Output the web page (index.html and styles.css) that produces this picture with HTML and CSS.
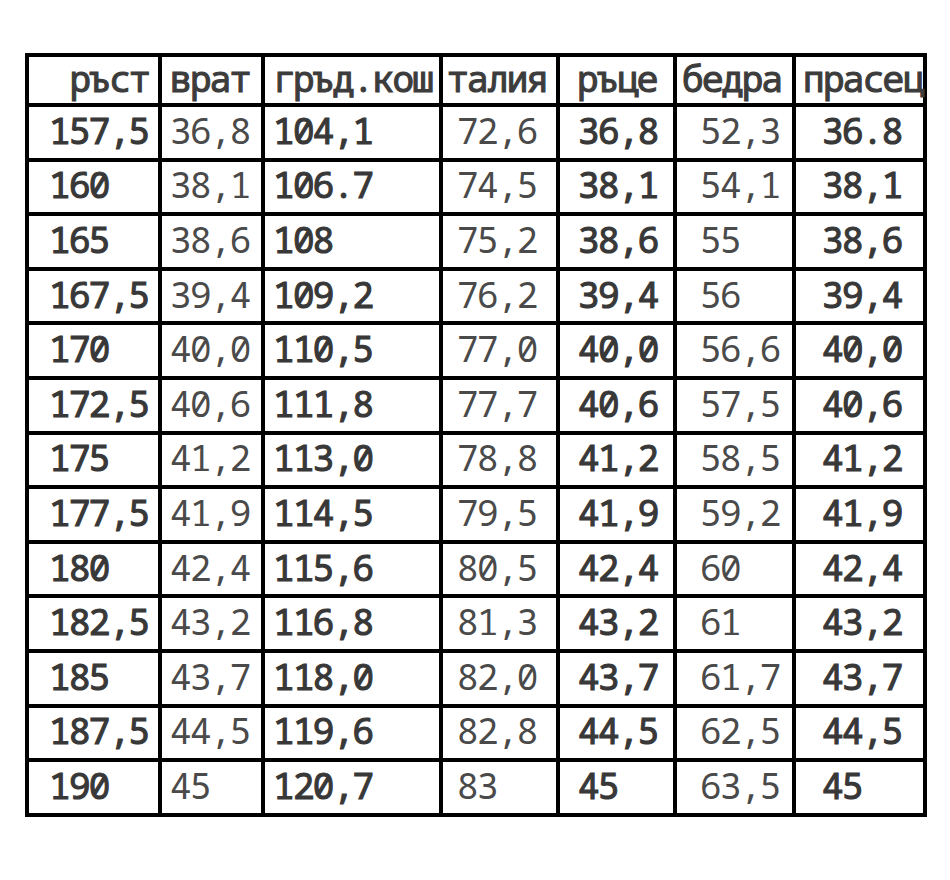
FILE: index.html
```html
<!DOCTYPE html>
<html lang="bg">
<head>
<meta charset="utf-8">
<title>Размери</title>
<link rel="stylesheet" href="styles.css">
</head>
<body>
<table class="sizes">
  <colgroup>
    <col class="w1"><col class="w2"><col class="w3"><col class="w4"><col class="w5"><col class="w6"><col class="w7">
  </colgroup>
  <thead>
    <tr><th>ръст</th><th>врат</th><th>гръд.кош</th><th>талия</th><th>ръце</th><th>бедра</th><th>прасец</th></tr>
  </thead>
  <tbody>
    <tr><td>157,5</td><td>36,8</td><td>104,1</td><td>72,6</td><td>36,8</td><td>52,3</td><td>36.8</td></tr>
    <tr><td>160</td><td>38,1</td><td>106.7</td><td>74,5</td><td>38,1</td><td>54,1</td><td>38,1</td></tr>
    <tr><td>165</td><td>38,6</td><td>108</td><td>75,2</td><td>38,6</td><td>55</td><td>38,6</td></tr>
    <tr><td>167,5</td><td>39,4</td><td>109,2</td><td>76,2</td><td>39,4</td><td>56</td><td>39,4</td></tr>
    <tr><td>170</td><td>40,0</td><td>110,5</td><td>77,0</td><td>40,0</td><td>56,6</td><td>40,0</td></tr>
    <tr><td>172,5</td><td>40,6</td><td>111,8</td><td>77,7</td><td>40,6</td><td>57,5</td><td>40,6</td></tr>
    <tr><td>175</td><td>41,2</td><td>113,0</td><td>78,8</td><td>41,2</td><td>58,5</td><td>41,2</td></tr>
    <tr><td>177,5</td><td>41,9</td><td>114,5</td><td>79,5</td><td>41,9</td><td>59,2</td><td>41,9</td></tr>
    <tr><td>180</td><td>42,4</td><td>115,6</td><td>80,5</td><td>42,4</td><td>60</td><td>42,4</td></tr>
    <tr><td>182,5</td><td>43,2</td><td>116,8</td><td>81,3</td><td>43,2</td><td>61</td><td>43,2</td></tr>
    <tr><td>185</td><td>43,7</td><td>118,0</td><td>82,0</td><td>43,7</td><td>61,7</td><td>43,7</td></tr>
    <tr><td>187,5</td><td>44,5</td><td>119,6</td><td>82,8</td><td>44,5</td><td>62,5</td><td>44,5</td></tr>
    <tr><td>190</td><td>45</td><td>120,7</td><td>83</td><td>45</td><td>63,5</td><td>45</td></tr>
  </tbody>
</table>
</body>
</html>
```
FILE: styles.css
```css
html, body {
  margin: 0;
  background: #ffffff;
}
body {
  padding: 53px 0 0 25px;
  font-family: "Noto Sans Mono", "Droid Sans Mono", "DejaVu Sans Mono", "Liberation Mono", monospace;
}
.sizes {
  border-collapse: separate;
  border-spacing: 4px;
  background: #000000;
  table-layout: fixed;
  width: 902px;
  font-size: 36px;
  letter-spacing: -1.7px;
  line-height: 1;
}
.w1 { width: 129px; }
.w2 { width: 99px; }
.w3 { width: 174px; }
.w4 { width: 113px; }
.w5 { width: 113px; }
.w6 { width: 115px; }
.w7 { width: 127px; }

.sizes th, .sizes td {
  background: #ffffff;
  padding: 0;
  text-align: left;
  white-space: nowrap;
  overflow: visible;
  vertical-align: middle;
  box-sizing: border-box;
}
.sizes th {
  height: 46px;
  font-weight: 400;
  color: #3c3c3c;
  -webkit-text-stroke: 1.1px #3c3c3c;
  padding-bottom: 3px;
}
.sizes td {
  height: 50.6px;
  color: #4a4a4a;
  font-weight: 400;
  padding-bottom: 3px;
}
.sizes td:nth-child(odd) {
  color: #383838;
  -webkit-text-stroke: 1.1px #383838;
}

/* header offsets */
.sizes th:nth-child(1) { text-align: right; padding-right: 9px; }
.sizes th:nth-child(2) { padding-left: 8px; }
.sizes th:nth-child(3) { padding-left: 8px; }
.sizes th:nth-child(4) { padding-left: 4px; }
.sizes th:nth-child(5) { padding-left: 17px; }
.sizes th:nth-child(6) { padding-left: 5px; }
.sizes th:nth-child(7) { padding-left: 7px; }

/* body offsets */
.sizes td:nth-child(1) { padding-left: 20px; }
.sizes td:nth-child(2) { padding-left: 8px; }
.sizes td:nth-child(3) { padding-left: 8px; }
.sizes td:nth-child(4) { padding-left: 14px; }
.sizes td:nth-child(5) { padding-left: 18px; }
.sizes td:nth-child(6) { padding-left: 23px; }
.sizes td:nth-child(7) { padding-left: 26px; }
```
